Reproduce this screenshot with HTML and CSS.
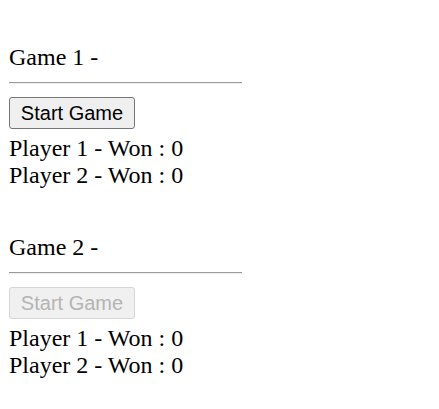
FILE: index.html
```html
<!DOCTYPE html>
<html lang="en">
<head>
  <meta charset="UTF-8" />
  <meta name="viewport" content="width=device-width, initial-scale=1" />
  <title>Games</title>
  <link rel="stylesheet" href="styles.css">
</head>
<body>
  <div class="game">
    <div class="game-title">Game 1 -</div>
    <hr class="divider" />
    <button class="start-btn">Start Game</button>
    <div class="player">Player 1 - Won : 0</div>
    <div class="player">Player 2 - Won : 0</div>
  </div>

  <div class="game">
    <div class="game-title">Game 2 -</div>
    <hr class="divider" />
    <button class="start-btn" disabled>Start Game</button>
    <div class="player">Player 1 - Won : 0</div>
    <div class="player">Player 2 - Won : 0</div>
  </div>
</body>
</html>
```

FILE: styles.css
```css
body {
  font-family: 'Liberation Serif', 'Times New Roman', serif;
  font-size: 24px;
  line-height: 26px;
  background-color: #fff;
  color: #000;
  margin: 0;
  padding: 0 9px;
}
.game {
  margin-top: 44px;
}
.game + .game {
  margin-top: 46px;
}
.game-title {
  margin: 0;
}
.divider {
  width: 233px;
  margin: 12px 0 13px 0;
  border: none;
  border-top: 1px solid #9a9a9a;
  border-bottom: 1px solid #eeeeee;
  height: 0;
}
.start-btn {
  display: block;
  width: 126px;
  height: 32px;
  margin-bottom: 6px;
  padding: 0;
  font-family: 'Liberation Sans', Arial, sans-serif;
  font-size: 20px;
  color: #000;
  background-color: #efefef;
  border: 1px solid #767676;
  border-radius: 3px;
}
.start-btn:disabled {
  color: #b4b4b4;
  background-color: #f0f0f0;
  border-color: #d6d6d6;
}
.player + .player {
  margin-top: 1px;
}
```
